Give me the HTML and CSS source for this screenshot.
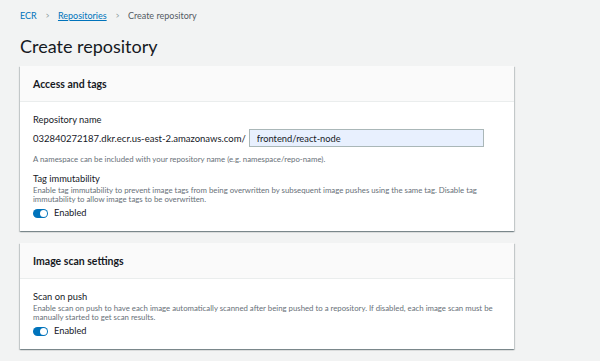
FILE: index.html
```html
<!DOCTYPE html>
<html lang="en">
    <head>
        <meta charset="UTF-8">
        <title>Create repository</title>
        <link rel="stylesheet" href="styles.css">
    </head>
    <body>
        <nav class="breadcrumb">
            <a href="#" class="crumb-link">ECR</a>
            <span class="crumb-sep">&gt;</span>
            <a href="#" class="crumb-link crumb-under">Repositories</a>
            <span class="crumb-sep">&gt;</span>
            <span class="crumb-current">Create repository</span>
        </nav>

        <h1 class="page-title">Create repository</h1>

        <div class="card">
            <div class="card-header">
                <h2>Access and tags</h2>
            </div>
            <div class="card-body">
                <div class="field">
                    <label class="field-label" for="repo_name">Repository name</label>
                    <div class="repo-row">
                        <span class="repo-prefix">032840272187.dkr.ecr.us-east-2.amazonaws.com/</span>
                        <input type="text" id="repo_name" class="repo-input" value="frontend/react-node">
                    </div>
                    <div class="field-hint">A namespace can be included with your repository name (e.g. namespace/repo-name).</div>
                </div>
                <div class="field">
                    <div class="field-label">Tag immutability</div>
                    <div class="field-desc">Enable tag immutability to prevent image tags from being overwritten by subsequent image pushes using the same tag. Disable tag immutability to allow image tags to be overwritten.</div>
                    <label class="toggle">
                        <span class="toggle-track"><span class="toggle-knob"></span></span>
                        Enabled
                    </label>
                </div>
            </div>
        </div>

        <div class="card">
            <div class="card-header">
                <h2>Image scan settings</h2>
            </div>
            <div class="card-body">
                <div class="field">
                    <div class="field-label">Scan on push</div>
                    <div class="field-desc">Enable scan on push to have each image automatically scanned after being pushed to a repository. If disabled, each image scan must be manually started to get scan results.</div>
                    <label class="toggle">
                        <span class="toggle-track"><span class="toggle-knob"></span></span>
                        Enabled
                    </label>
                </div>
            </div>
        </div>

        <div class="card"></div>
    </body>
</html>
```

FILE: styles.css
```css
body {
    margin: 0;
    padding: 0 20px;
    background-color: #f2f3f3;
    font-family: Lato, "Open Sans", sans-serif;
    color: #16191f;
}
.breadcrumb {
    display: flex;
    align-items: center;
    height: 16px;
    padding-top: 7px;
    font-size: 9px;
}
.crumb-link {
    color: #0073bb;
    text-decoration: none;
}
.crumb-under {
    text-decoration: underline;
}
.crumb-sep {
    color: #879596;
    margin: 0 8px;
    transform: scaleX(0.7);
}
.crumb-current {
    color: #545b64;
}
.page-title {
    margin: 13px 0 0;
    font-size: 18px;
    font-weight: 400;
    line-height: 20px;
    height: 30px;
}
.card {
    width: 494px;
    background-color: #fff;
    margin-bottom: 12px;
    box-shadow: 0 1px 1px 0 rgba(0, 28, 36, 0.3), 1px 1px 1px 0 rgba(0, 28, 36, 0.15), -1px 1px 1px 0 rgba(0, 28, 36, 0.15);
}
.card-header {
    background-color: #fafafa;
    border-bottom: 1px solid #eaeded;
    height: 35px;
    padding: 0 13px;
    display: flex;
    align-items: center;
}
.card-header h2 {
    margin: 0;
    font-size: 10.5px;
    font-weight: 700;
}
.card-body {
    padding: 11px 13px 11px;
}
.field {
    margin-bottom: 8px;
}
.field:last-child {
    margin-bottom: 0;
}
.field-label {
    display: block;
    font-size: 9.3px;
    line-height: 14px;
}
.repo-row {
    display: flex;
    align-items: center;
    margin-top: 2px;
}
.repo-prefix {
    font-size: 9.5px;
    white-space: nowrap;
    margin-right: 3px;
}
.repo-input {
    width: 235px;
    height: 18px;
    box-sizing: border-box;
    padding: 0 7px;
    border: 1px solid #aab7b8;
    background-color: #e8f0fe;
    font-family: inherit;
    font-size: 9.3px;
    color: #16191f;
}
.field-hint, .field-desc {
    font-size: 7.8px;
    line-height: 9px;
    color: #687078;
}
.field-hint {
    margin-top: 8px;
}
.toggle {
    display: flex;
    align-items: center;
    margin-top: 2px;
    font-size: 9.3px;
    line-height: 14px;
}
.toggle-track {
    width: 15px;
    height: 9px;
    border-radius: 5px;
    background-color: #0073bb;
    margin-right: 6px;
    position: relative;
}
.toggle-knob {
    position: absolute;
    right: 1px;
    top: 1px;
    width: 7px;
    height: 7px;
    border-radius: 50%;
    background-color: #fff;
}
```
